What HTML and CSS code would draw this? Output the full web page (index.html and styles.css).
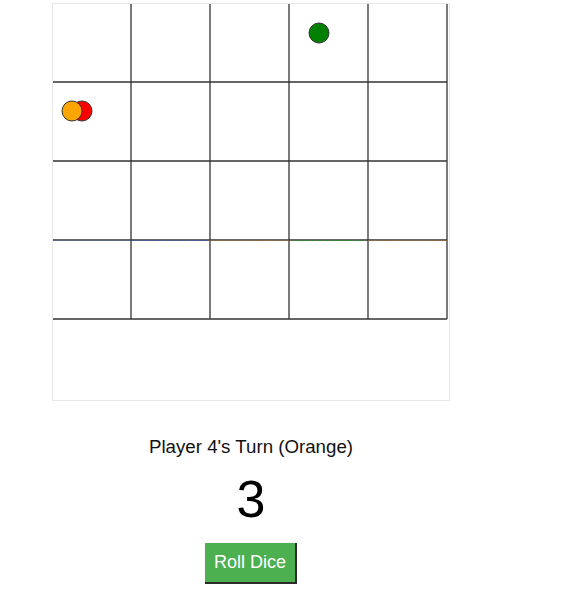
FILE: index.html
```html
<!DOCTYPE html>
<html lang="en">

<head>
  <meta charset="UTF-8">
  <meta name="viewport" content="width=device-width, initial-scale=1.0">
  <title>Ludo Board</title>
  <link rel="stylesheet" href="styles.css">
</head>

<body>

  <div id="jogo">

    <div class="tabuleiro">
      <svg width="396" height="396" viewBox="0 0 396 396">
        <!-- grid lines -->
        <g stroke="#333" stroke-width="1.3">
          <line x1="78" y1="0" x2="78" y2="315" />
          <line x1="157" y1="0" x2="157" y2="315" />
          <line x1="236" y1="0" x2="236" y2="315" />
          <line x1="315" y1="0" x2="315" y2="315" />
          <line x1="394" y1="0" x2="394" y2="315" />
          <line x1="0" y1="78" x2="394" y2="78" />
          <line x1="0" y1="157" x2="394" y2="157" />
          <line x1="0" y1="236" x2="394" y2="236" />
          <line x1="0" y1="315" x2="394" y2="315" />
        </g>

        <!-- player trails -->
        <g stroke-width="1" opacity="0.55" stroke-dasharray="2 1">
          <line x1="0" y1="236.5" x2="78" y2="236.5" stroke="#4a6fa0" />
          <line x1="78" y1="236.5" x2="157" y2="236.5" stroke="#3050d0" />
          <line x1="157" y1="236.5" x2="236" y2="236.5" stroke="#c07020" />
          <line x1="240" y1="236.5" x2="312" y2="236.5" stroke="#00a000" />
          <line x1="315" y1="236.5" x2="394" y2="236.5" stroke="#c07020" />
        </g>

        <!-- pieces -->
        <g stroke="#333" stroke-width="1">
          <circle cx="29" cy="107" r="10" fill="#ff0000" />
          <circle cx="19" cy="107" r="10" fill="#ffa500" />
          <circle cx="266" cy="29" r="10" fill="#008000" />
        </g>
      </svg>
    </div>

    <p class="vez">Player 4's Turn (Orange)</p>
    <div class="dado">3</div>
    <button class="button">Roll Dice</button>

  </div>

</body>

</html>
```

FILE: styles.css
```css
html,
body {
  margin: 0;
  background-color: white;
  font-family: "Liberation Sans", Arial, sans-serif;
}

#jogo {
  display: flex;
  flex-direction: column;
  align-items: center;
  width: 502px;
  padding-top: 3px;
}

.tabuleiro {
  width: 398px;
  height: 398px;
  box-sizing: border-box;
  border: 1px solid #e8e8e8;
  background-color: white;
}

.tabuleiro svg {
  display: block;
}

.vez {
  margin: 35px 0 0 0;
  font-size: 18.7px;
  color: #111;
}

.dado {
  margin-top: 11px;
  font-size: 52px;
  color: black;
}

.button {
  margin-top: 14px;
  background-color: #4caf50;
  color: white;
  font-family: "Liberation Sans", Arial, sans-serif;
  font-size: 18px;
  border: 0px solid;
  border-right: 2px solid #2b2b2b;
  border-bottom: 2px solid #2b2b2b;
  width: 92px;
  height: 41px;
  padding: 0;
}
```
